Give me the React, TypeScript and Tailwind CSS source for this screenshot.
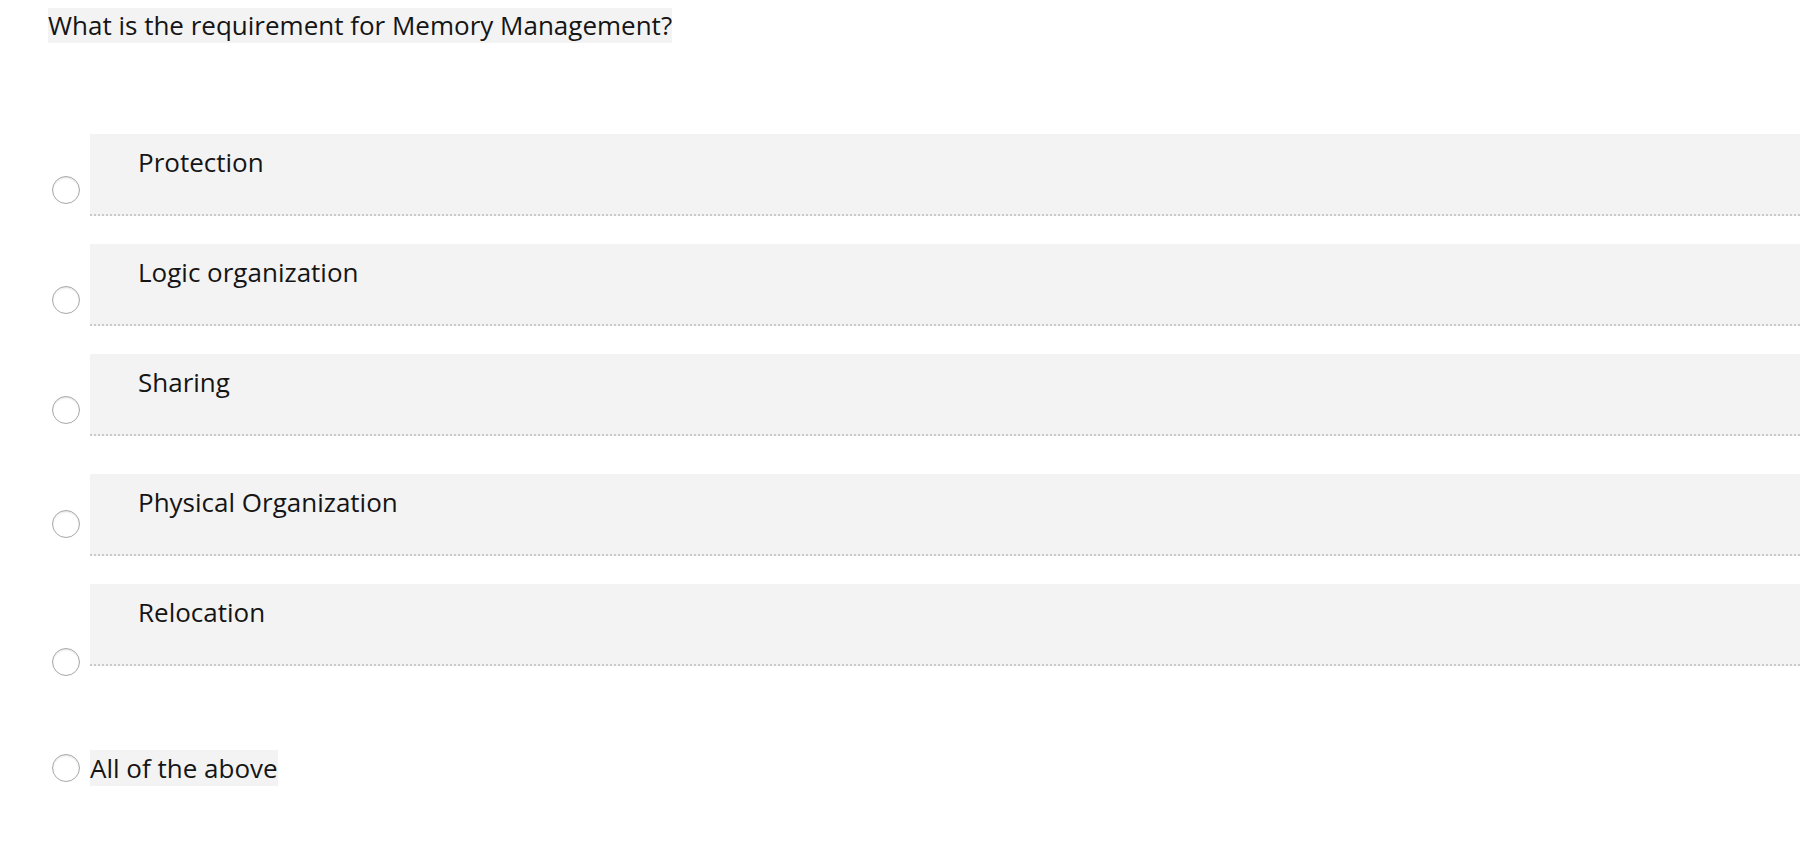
const options = [
  { label: "Protection", radioTop: "mt-[42px]", rowGap: "mt-0" },
  { label: "Logic organization", radioTop: "mt-[42px]", rowGap: "mt-[28px]" },
  { label: "Sharing", radioTop: "mt-[42px]", rowGap: "mt-[28px]" },
  { label: "Physical Organization", radioTop: "mt-[36px]", rowGap: "mt-[38px]" },
  { label: "Relocation", radioTop: "mt-[64px]", rowGap: "mt-[28px]" },
];

function Radio({ className = "" }: { className?: string }) {
  return (
    <span
      className={`block w-[28px] h-[28px] shrink-0 rounded-full border border-[#a9a9a9] bg-white shadow-[inset_0_1px_2px_rgba(0,0,0,0.12)] ${className}`}
    />
  );
}

export default function App() {
  return (
    <div
      className="min-h-screen bg-white text-[#151515]"
      style={{ fontFamily: '"Open Sans", "Noto Sans", sans-serif' }}
    >
      <div className="pt-[8px] pl-[48px]">
        <span className="inline-block bg-[#f3f3f3] text-[26px] leading-[35px]">
          What is the requirement for Memory Management?
        </span>
      </div>

      <div className="mt-[91px] pl-[52px]">
        {options.map((opt) => (
          <div key={opt.label} className={`flex items-start h-[82px] ${opt.rowGap}`}>
            <Radio className={opt.radioTop} />
            <div className="flex-1 ml-[10px] h-[82px] pt-[10px] pl-[48px] bg-[#f3f3f3] border-b-2 border-dotted border-[#c9c9c9] text-[26px] leading-[36px]">
              {opt.label}
            </div>
          </div>
        ))}

        <div className="flex items-center mt-[84px]">
          <Radio />
          <span className="ml-[10px] bg-[#f3f3f3] text-[26px] leading-[36px]">
            All of the above
          </span>
        </div>
      </div>
    </div>
  );
}
